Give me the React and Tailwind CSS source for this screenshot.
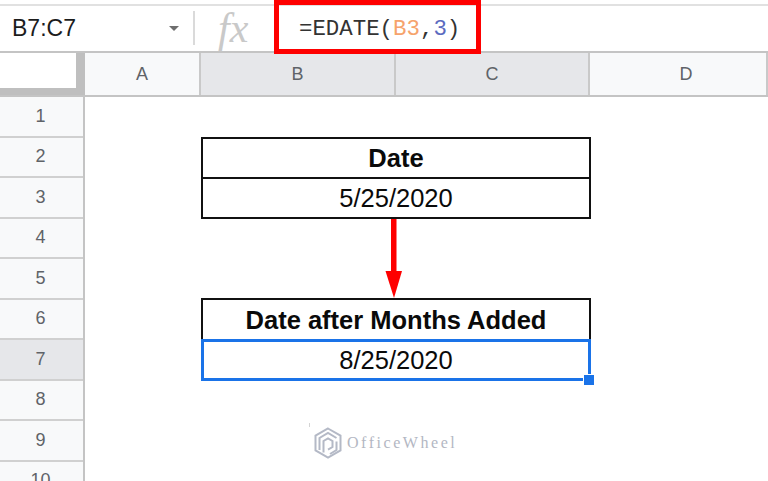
const sans = { fontFamily: '"Liberation Sans", Arial, sans-serif' };

const columns = [
  { label: "A", width: "w-[116px]", active: false, extra: "" },
  { label: "B", width: "w-[195px]", active: true, extra: "" },
  { label: "C", width: "w-[194px]", active: true, extra: "" },
  { label: "D", width: "flex-1", active: false, extra: "pl-[16px]" },
];

const rows = ["1", "2", "3", "4", "5", "6", "7", "8", "9", "10"];

function Logo() {
  return (
    <div className="relative flex items-center gap-[5px]">
      <svg width="28" height="32" viewBox="0 0 28 32" fill="none" stroke="#b4b9c6" strokeWidth="2">
        <path d="M14 1.500 26.500 8.700v14.600L14 30.500 1.500 23.300V8.700z" />
        <path d="M5.500 23V11L14 6l8.500 5" />
        <path d="M9.500 25.500V14l4.500-2.700 4.500 2.700v6l-4.500 2.700" />
        <path d="M22.500 14.500v8.500L16 27" />
      </svg>
      <span
        className="text-[16px] leading-none tracking-[2.550px] text-[#b3b7c3]"
        style={{ fontFamily: '"Liberation Serif", serif' }}
      >
        OfficeWheel
      </span>
      <span className="absolute left-[-5px] top-[-4px] h-[4px] w-[1px] bg-[#d4d4d4]" />
    </div>
  );
}

function Arrow() {
  return (
    <div className="flex h-[79px] justify-center">
      <svg width="18" height="79" viewBox="0 0 18 79" className="ml-[-4px]">
        <rect x="6" y="0" width="5.500" height="62" fill="#fe0000" />
        <path d="M0.500 52H17L9 79z" fill="#fe0000" />
      </svg>
    </div>
  );
}

function Cell({ children, bold, className = "" }) {
  return (
    <div
      className={`flex items-center justify-center pt-[2px] text-[25.500px] leading-none text-[#0a0a0a] ${bold ? "font-bold" : ""} ${className}`}
    >
      {children}
    </div>
  );
}

export default function App() {
  return (
    <div className="flex h-[481px] w-[768px] flex-col overflow-hidden bg-white" style={sans}>
      <div className="h-[4px] shrink-0" />
      <div className="h-[2px] shrink-0 bg-[#e1e1e1]" />

      {/* formula bar */}
      <div className="flex h-[44px] shrink-0 items-center">
        <div className="flex w-[193px] items-center justify-between pl-[12px] pr-[14px]">
          <span className="text-[23px] leading-none text-[#1c1c1c]">B7:C7</span>
          <span className="h-0 w-0 border-x-[5px] border-t-[5px] border-x-transparent border-t-[#6e6e6e]" />
        </div>
        <div className="h-[34px] w-[2px] bg-[#dadada]" />
        <span
          className="ml-[23px] w-[33px] text-[42px] italic leading-none text-[#c9c9c9]"
          style={{ fontFamily: '"Liberation Serif", serif' }}
        >
          fx
        </span>
        <div className="relative ml-[23px] h-full">
          <div
            className="pl-[25px] pt-[1px] text-[22.400px] leading-[44px] text-[#333]"
            style={{ fontFamily: '"Liberation Mono", monospace' }}
          >
            =EDATE(<span className="text-[#f6a36c]">B3</span>,<span className="text-[#5c6bc0]">3</span>)
          </div>
          {/* red highlight box over the formula */}
          <div className="absolute left-0 top-[-6px] h-[54px] w-[207px] border-[5px] border-[#fe0000]" />
        </div>
      </div>

      {/* column headers */}
      <div className="h-[1px] shrink-0" />
      <div className="flex h-[46px] shrink-0 border-y-2 border-[#c4c4c4]">
        <div className="flex h-full w-[85px] shrink-0 flex-col">
          <div className="flex flex-1">
            <div className="w-[76px] bg-white" />
            <div className="flex-1 bg-[#bfbfbf]" />
          </div>
          <div className="h-[7px] bg-[#bfbfbf]" />
        </div>
        {columns.map((col) => (
          <div
            key={col.label}
            className={`flex items-center justify-center border-r-2 border-[#c9c9c9] text-[18px] text-[#5f6368] ${col.width} ${col.extra} ${col.active ? "bg-[#e6e7ea]" : "bg-[#f8f9fa]"}`}
          >
            {col.label}
          </div>
        ))}
      </div>

      <div className="flex min-h-0 flex-1">
        {/* row headers */}
        <div className="w-[85px] shrink-0 border-r-2 border-[#c4c4c4]">
          {rows.map((row) => (
            <div
              key={row}
              className={`flex h-[40.500px] items-center justify-center border-b-2 border-[#d0d0d0] pr-[2px] text-[18px] text-[#5f6368] ${row === "7" ? "bg-[#e6e7ea]" : "bg-[#f8f9fa]"}`}
            >
              {row}
            </div>
          ))}
        </div>

        {/* sheet content */}
        <div className="min-w-0 flex-1 pl-[116px] pt-[40px]">
          <div className="w-[390px]">
            <div className="border-2 border-[#111]">
              <Cell bold className="h-[40px] border-b-2 border-[#111]">Date</Cell>
              <Cell className="h-[38px]">5/25/2020</Cell>
            </div>
            <Arrow />
            <div className="relative">
              <div className="border-x-2 border-t-2 border-[#111]">
                <Cell bold className="h-[39px]">Date after Months Added</Cell>
              </div>
              <div className="relative border-[3px] border-[#1a73e8]">
                <Cell className="h-[36px]">8/25/2020</Cell>
                <div className="absolute bottom-[-8px] right-[-7px] h-[12px] w-[12px] border border-white bg-[#1a73e8]" />
              </div>
            </div>
            <div className="mt-[46px] flex justify-start pl-[113px]">
              <Logo />
            </div>
          </div>
        </div>
      </div>
    </div>
  );
}
